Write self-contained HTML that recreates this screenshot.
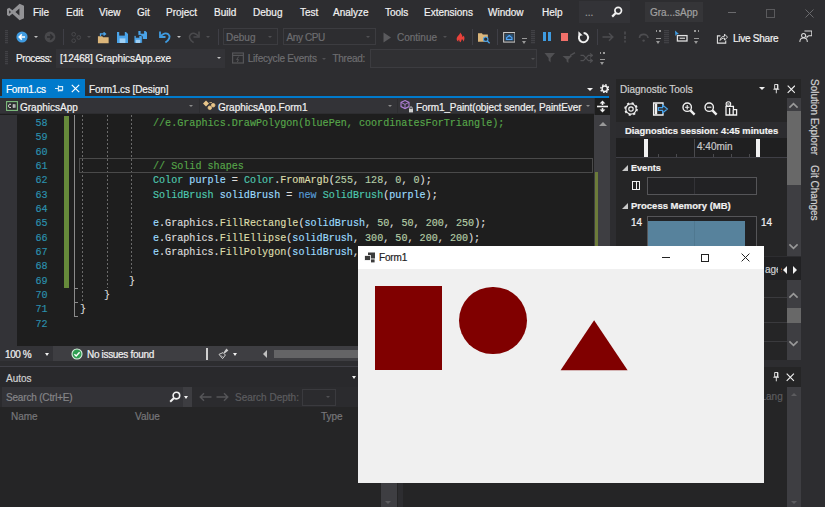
<!DOCTYPE html>
<html><head><meta charset="utf-8"><title>GraphicsApp</title>
<style>
*{margin:0;padding:0;box-sizing:border-box}
html,body{width:825px;height:507px;overflow:hidden;background:#2d2d30}
body{position:relative;font-family:"Liberation Sans",sans-serif;font-size:10px;color:#f1f1f1}
.a{position:absolute;white-space:nowrap}
.t{position:absolute;white-space:nowrap;line-height:14px;font-size:10px;-webkit-text-stroke:.2px}
.b{font-weight:bold}
.m{color:#f1f1f1;top:6px}
.dim{color:#6d6d70}
.code{position:absolute;white-space:pre;font-family:"Liberation Mono",monospace;font-size:10.1px;line-height:14px;left:153px;color:#dcdcdc;-webkit-text-stroke:.15px}
.ln{position:absolute;font-family:"Liberation Mono",monospace;font-size:10.1px;line-height:14px;left:23px;width:24.5px;text-align:right;color:#2b91af;-webkit-text-stroke:.15px}
.g{color:#57a64a}.ty{color:#4ec9b0}.v{color:#9cdcfe}.k{color:#569cd6}.n{color:#b5cea8}.fn{color:#dcdcaa}

.grip{width:3px;height:14px;background:repeating-linear-gradient(180deg,#414145 0 1px,#323236 1px 2px)}
.sep{width:1px;height:16px;background:#3f3f46}
.dd{width:0;height:0;border-left:2.6px solid transparent;border-right:2.6px solid transparent;border-top:2.8px solid #c0c0c0}
.dimdd{border-top-color:#505053}
.combo{border:1px solid #3c3c40;background:#2d2d30}
.ovf{width:5px;height:6px;border-top:1px solid #999;}
.ovf:after{content:"";position:absolute;left:0;top:2px;border-left:2.5px solid transparent;border-right:2.5px solid transparent;border-top:3px solid #999}
.ovd{width:5px;height:2px;background:linear-gradient(90deg,#999 0 1.5px,transparent 1.5px 3.5px,#999 3.5px 5px)}

.vd{width:1px;background:repeating-linear-gradient(180deg,#6a6a6a 0 2px,transparent 2px 4px)}

.tri{width:0;height:0;border-left:6px solid transparent;border-bottom:6px solid #c8c8c8}
.vt{transform-origin:0 0;transform:rotate(90deg);font-size:10px;-webkit-text-stroke:.2px;line-height:14px;color:#d0d0d0}
</style></head><body>

<!-- ===== menu bar ===== -->
<div id="menubar">
<svg class="a" style="left:6px;top:3px" width="20" height="18" viewBox="0 0 20 18"><path d="M13.6 0.8L18 2.8V15.2L13.6 17.2L6.4 10.7L3.2 13.2L1 12.1V5.9L3.2 4.8L6.4 7.3Z M13.4 5.6L9.4 9L13.4 12.4Z M3.2 7.2V10.8L5 9Z" fill="#939396" fill-rule="evenodd"/></svg>
<span class="t m" style="left:33px">File</span>
<span class="t m" style="left:66px">Edit</span>
<span class="t m" style="left:99px">View</span>
<span class="t m" style="left:137px">Git</span>
<span class="t m" style="left:166px">Project</span>
<span class="t m" style="left:214px">Build</span>
<span class="t m" style="left:253px">Debug</span>
<span class="t m" style="left:300px">Test</span>
<span class="t m" style="left:333px">Analyze</span>
<span class="t m" style="left:385px">Tools</span>
<span class="t m" style="left:424px">Extensions</span>
<span class="t m" style="left:488px">Window</span>
<span class="t m" style="left:542px">Help</span>
<div class="a" style="left:579px;top:1px;width:51px;height:22px;background:#333337"></div>
<span class="t" style="left:585px;top:6px;color:#999">...</span>
<svg class="a" style="left:611px;top:6px" width="12" height="12" viewBox="0 0 12 12"><circle cx="7.2" cy="4.6" r="3.3" fill="none" stroke="#f1f1f1" stroke-width="1.7"/><path d="M4.8 7L1.2 10.6" stroke="#f1f1f1" stroke-width="2.2"/></svg>
<div class="a" style="left:645px;top:2px;width:58px;height:20px;background:#353538"></div>
<div class="a" style="left:728px;top:12px;width:8px;height:1px;background:#6a6a6d"></div>
<div class="a" style="left:766px;top:9px;width:8.5px;height:8.5px;border:1px solid #5a5a5d"></div>
<svg class="a" style="left:805px;top:9px" width="9" height="9" viewBox="0 0 9 9"><path d="M0.5 0.5L8.5 8.5M8.5 0.5L0.5 8.5" stroke="#6a6a6d" stroke-width="1"/></svg>
<span class="t" style="left:650px;top:6px;color:#a0a0a0">Gra...sApp</span>
</div>

<!-- ===== toolbars ===== -->
<div id="toolbar1">
<div class="a grip" style="left:5px;top:30px"></div>
<svg class="a" style="left:16px;top:31px" width="12" height="12" viewBox="0 0 12 12"><circle cx="6" cy="6" r="5.6" fill="#3f9be0"/><path d="M9 6H3.4M5.8 3.4L3.2 6L5.8 8.6" stroke="#fff" stroke-width="1.5" fill="none"/></svg>
<div class="a dd" style="left:34px;top:36px"></div>
<svg class="a" style="left:44px;top:31px" width="12" height="12" viewBox="0 0 12 12"><circle cx="6" cy="6" r="5.4" fill="#48484b"/><path d="M3 6H8.6M6.2 3.4L8.8 6L6.2 8.6" stroke="#2d2d30" stroke-width="1.5" fill="none"/></svg>
<div class="a sep" style="left:63px;top:29px"></div>
<svg class="a" style="left:69.5px;top:30.5px" width="12" height="13" viewBox="0 0 13 14"><circle cx="4" cy="3.5" r="2" stroke="#4a4a4d" fill="none"/><circle cx="4" cy="10.5" r="2" stroke="#4a4a4d" fill="none"/><circle cx="9.5" cy="7" r="2" stroke="#4a4a4d" fill="none"/></svg>
<div class="a dd dimdd" style="left:87px;top:36px"></div>
<svg class="a" style="left:97px;top:31.5px" width="13" height="12" viewBox="0 0 15 14"><path d="M1 5h5l1 1.2h6.5V13H1z" fill="#dcb67a"/><path d="M4 5V2.2h5.5M7.6 0.4l2.2 1.8L7.6 4" stroke="#4aa3e8" stroke-width="1.5" fill="none"/></svg>
<svg class="a" style="left:117px;top:32px" width="11" height="11" viewBox="0 0 11 11"><path d="M0 0h9l2 2v9H0z" fill="#4aa3e8"/><rect x="2.2" y="0" width="5.6" height="3.6" fill="#2d2d30"/><rect x="2.6" y="6.4" width="5.8" height="4.6" fill="#9fd0f5"/></svg>
<svg class="a" style="left:133.5px;top:30.8px" width="13.2" height="12.4" viewBox="0 0 15 14"><path d="M5 0h8l2 2v7H5z" fill="#4aa3e8"/><rect x="7.5" y="0" width="4" height="3" fill="#2d2d30"/><path d="M0 5h8l1.5 1.5V14H0z" fill="#4aa3e8" stroke="#2d2d30" stroke-width="1"/><rect x="2" y="5" width="4" height="2.6" fill="#2d2d30"/><rect x="2" y="10" width="5" height="4" fill="#9fd0f5"/></svg>
<svg class="a" style="left:158px;top:30px" width="14" height="14" viewBox="0 0 14 14"><path d="M2 1.5V7H7.5" stroke="#3f9be0" stroke-width="1.8" fill="none"/><path d="M2.6 6.4C4.5 3.4 8 2.4 10.3 4.3C12.6 6.3 11.6 9.8 7.4 12.6" stroke="#3f9be0" stroke-width="1.8" fill="none"/></svg>
<div class="a dd" style="left:177px;top:36px"></div>
<svg class="a" style="left:187px;top:30px" width="14" height="14" viewBox="0 0 14 14"><path d="M12 1.5V7H6.5" stroke="#4a4a4d" stroke-width="1.6" fill="none"/><path d="M11.4 6.4C9.5 3.4 6 2.4 3.7 4.3C1.4 6.3 2.4 9.8 6.6 12.6" stroke="#4a4a4d" stroke-width="1.6" fill="none"/></svg>
<div class="a dd dimdd" style="left:206px;top:36px"></div>
<div class="a sep" style="left:217.5px;top:29px"></div>
<div class="a combo" style="left:222.5px;top:28.4px;width:55.5px;height:17px"></div>
<span class="t dim" style="left:226px;top:30.5px">Debug</span>
<div class="a dd dimdd" style="left:268px;top:36px"></div>
<div class="a combo" style="left:282.5px;top:28.4px;width:93.5px;height:17px"></div>
<span class="t dim" style="left:286.5px;top:30.5px;letter-spacing:-.38px">Any CPU</span>
<div class="a dd dimdd" style="left:366px;top:36px"></div>
<svg class="a" style="left:383px;top:32px" width="9" height="11" viewBox="0 0 9 11"><path d="M0.5 0.5L8 5.5L0.5 10.5z" fill="#5a5a5d"/></svg>
<span class="t dim" style="left:397px;top:30.5px">Continue</span>
<div class="a dd dimdd" style="left:443px;top:36px"></div>
<svg class="a" style="left:455.6px;top:32px" width="9.2" height="11" viewBox="0 0 11 14" preserveAspectRatio="none"><path d="M5 0.5C6.5 3 8 4 7.6 6.4C9 5.6 9.2 4.6 9.2 4.6C10.6 7 10.6 10.4 8.4 12.4C8.8 11 8.2 9.6 7 9C7 10.6 6 11.4 5.6 13C4 12.4 3.6 11 3.8 9.6C2.8 10.2 2.6 11.2 2.8 12.4C0.6 10.8 0.2 8 1.6 6C2.8 4.2 4.8 3 5 0.5z" fill="#e8413a"/></svg>
<div class="a sep" style="left:472px;top:29px"></div>
<svg class="a" style="left:477.3px;top:31.5px" width="14" height="12" viewBox="0 0 16 14"><path d="M1 1.5h4.6l1 1.3H12.5V11.5H1z" fill="#dcb67a"/><circle cx="10" cy="8.4" r="2.6" fill="#2d2d30" stroke="#4aa3e8" stroke-width="1.3"/><path d="M12 10.4L14.6 13" stroke="#4aa3e8" stroke-width="1.6"/></svg>
<div class="a sep" style="left:497px;top:29px"></div>
<svg class="a" style="left:502.5px;top:32px" width="12.6" height="10.6" viewBox="0 0 14 12"><rect x="0.6" y="0.6" width="12.8" height="10.8" fill="none" stroke="#c8c8c8" stroke-width="1.2"/><rect x="2.2" y="2.4" width="9.6" height="7.4" fill="#2a4f70"/><path d="M4 8.6V6.4L7 4l3 2.4v2.2z" fill="none" stroke="#55aaff" stroke-width="1.2"/></svg>
<div class="a ovf" style="left:522px;top:38px"></div>
<div class="a grip" style="left:530.5px;top:30px;width:4.5px"></div>
<div class="a" style="left:542.5px;top:32.2px;width:3px;height:8.6px;background:#3f9be0"></div>
<div class="a" style="left:547.5px;top:32.2px;width:3px;height:8.6px;background:#3f9be0"></div>
<div class="a" style="left:560.7px;top:33.2px;width:7.6px;height:7.4px;background:#f1706a"></div>
<svg class="a" style="left:577px;top:30px" width="13" height="14" viewBox="0 0 13 14"><path d="M3.2 4.4A4.6 4.6 0 1 0 6.6 3" stroke="#f1f1f1" stroke-width="1.9" fill="none"/><path d="M1.4 1.2V5.6H5.8z" fill="#f1f1f1"/></svg>
<div class="a sep" style="left:597px;top:29px"></div>
<svg class="a" style="left:602px;top:32px" width="12" height="10" viewBox="0 0 12 10"><path d="M0.5 5H10.5M7 1.2L10.8 5L7 8.8" stroke="#4d4d50" stroke-width="1.5" fill="none"/></svg>
<svg class="a" style="left:622px;top:30px" width="6" height="14" viewBox="0 0 6 14"><path d="M3 1.5V12.5" stroke="#4d4d50" stroke-width="1.6" stroke-dasharray="3 1.5"/></svg>
<svg class="a" style="left:637.5px;top:31px" width="12" height="12" viewBox="0 0 12 12"><path d="M1.5 7C1.5 2.2 10 2.2 10 7" stroke="#4d4d50" stroke-width="1.6" fill="none"/><circle cx="5.6" cy="9.6" r="1.2" fill="#4d4d50"/></svg>
<div class="a ovf" style="left:656px;top:38px"></div>
<div class="a ovd" style="left:656px;top:30px"></div>
<div class="a grip" style="left:664px;top:30px;width:5px"></div>
<svg class="a" style="left:674px;top:30px" width="14" height="13" viewBox="0 0 14 13"><path d="M1 0.5L5 4L2.6 4.4L1.4 6z" fill="#3f9be0"/><rect x="3.4" y="5.6" width="9.6" height="5.4" fill="none" stroke="#e0e0e0" stroke-width="1.3"/><rect x="5.6" y="7.6" width="5.4" height="1.4" fill="#bbb"/></svg>
<div class="a ovf" style="left:693.5px;top:38px"></div>
<div class="a ovd" style="left:693.5px;top:30px"></div>
<svg class="a" style="left:715.5px;top:32.4px" width="12.4" height="12.4" viewBox="0 0 14 14"><path d="M5 4.4H1.6V12.6H11V9.6" stroke="#e0e0e0" stroke-width="1.2" fill="none"/><path d="M4.6 9.6C4.8 6.4 7 4.8 9.6 4.8V2.4L13 5.8L9.6 9.2V6.9C7.4 6.9 5.8 7.6 4.6 9.6z" stroke="#e0e0e0" stroke-width="1.1" fill="none"/></svg>
<span class="t" style="left:733px;top:32px;color:#f1f1f1;letter-spacing:-.25px">Live Share</span>
<svg class="a" style="left:798.6px;top:30.2px" width="13.6" height="13" viewBox="0 0 16 15"><path d="M6.4 1H15V6.6H11.4L9.4 8.4V6.6" stroke="#d8d8d8" stroke-width="1.2" fill="none"/><circle cx="5.4" cy="6.4" r="2.4" stroke="#d8d8d8" stroke-width="1.2" fill="#2d2d30"/><path d="M1 14C1 10.6 3 9.4 5.4 9.4C7.8 9.4 9.8 10.6 9.8 14" stroke="#d8d8d8" stroke-width="1.2" fill="none"/></svg>
</div>
<div id="toolbar2">
<div class="a grip" style="left:5px;top:51px"></div>
<span class="t" style="left:16px;top:52px;color:#f1f1f1;letter-spacing:-.4px">Process:</span>
<div class="a" style="left:56px;top:49px;width:168.5px;height:18.5px;background:#333337"></div>
<span class="t" style="left:60px;top:52px;color:#f1f1f1;letter-spacing:-.08px">[12468] GraphicsApp.exe</span>
<div class="a dd" style="left:217px;top:57px"></div>
<svg class="a" style="left:232px;top:52px" width="12" height="12" viewBox="0 0 12 12"><rect x="0.6" y="1" width="10.8" height="10" fill="none" stroke="#555558" stroke-width="1.2"/><path d="M0.6 3.4H11.4" stroke="#555558" stroke-width="1.2"/><path d="M6.6 4.6L4.6 7.6H6.4L5.4 10" stroke="#555558" stroke-width="1" fill="none"/></svg>
<span class="t dim" style="left:247.7px;top:52px;letter-spacing:-.2px">Lifecycle Events</span>
<div class="a dd dimdd" style="left:321.7px;top:57.5px"></div>
<span class="t dim" style="left:332.4px;top:52px;letter-spacing:-.25px">Thread:</span>
<div class="a combo" style="left:370px;top:49px;width:167px;height:18.5px;background:#303033"></div>
<div class="a dd dimdd" style="left:530.5px;top:57.5px"></div>
<svg class="a" style="left:543.5px;top:52px" width="12" height="12" viewBox="0 0 12 12"><path d="M0.5 1H11L6.6 6V10.6L4.6 8.6V6z" fill="#505053"/></svg>
<svg class="a" style="left:562px;top:52px" width="14" height="12" viewBox="0 0 14 12"><path d="M0.5 4H10L6.4 7.6V11L4.6 9.4V7.6z" fill="#505053"/><path d="M8 3.6L13 0.6" stroke="#505053" stroke-width="1.4"/></svg>
<svg class="a" style="left:580px;top:52px" width="13" height="12" viewBox="0 0 13 12"><path d="M0.5 3.4H3.4L8.4 8.6H12M0.5 8.6H3.4L8.4 3.4H12M10 1.4L12.4 3.4L10 5.4M10 6.6L12.4 8.6L10 10.6" stroke="#505053" stroke-width="1.2" fill="none"/></svg>
<div class="a ovf" style="left:600px;top:59px"></div>
<div class="a ovd" style="left:600px;top:52px"></div>
</div>

<!-- ===== document tabs ===== -->
<div id="tabs">
<div class="a" style="left:0;top:96px;width:609px;height:1.7px;background:#007acc"></div>
<div class="a" style="left:2px;top:79.3px;width:83px;height:17.7px;background:#007acc"></div>
<span class="t" style="left:6px;top:82.5px;color:#fff;letter-spacing:-.25px">Form1.cs</span>
<svg class="a" style="left:55px;top:84px" width="9" height="9" viewBox="0 0 9 9"><path d="M0 4.5H3M3.4 1.6V7.4M3.4 2.6H7.6V6H3.4M3.4 6.6H7.6" stroke="#d6ebf8" stroke-width="1.1" fill="none"/></svg>
<svg class="a" style="left:71px;top:84px" width="9" height="9" viewBox="0 0 9 9"><path d="M0.8 0.8L8.2 8.2M8.2 0.8L0.8 8.2" stroke="#fff" stroke-width="1.2"/></svg>
<span class="t" style="left:89px;top:82.5px;color:#f1f1f1;letter-spacing:-.1px">Form1.cs [Design]</span>
<div class="a dd" style="left:586.5px;top:88px;border-top-color:#f1f1f1;border-width:3.5px 3.2px 0 3.2px"></div>
<svg class="a" style="left:599.5px;top:83.5px" width="9.5" height="9.5" viewBox="0 0 11 11"><circle cx="5.5" cy="5.5" r="3.1" fill="none" stroke="#f1f1f1" stroke-width="1.7"/><circle cx="5.5" cy="5.5" r="4.6" fill="none" stroke="#f1f1f1" stroke-width="1.6" stroke-dasharray="1.8 1.81"/></svg>
<!-- nav bar -->
<div class="a" style="left:0;top:97.7px;width:610px;height:17px;background:#2d2d30"></div>
<div class="a" style="left:0;top:97.7px;width:594px;height:15.6px;background:#333337"></div>
<svg class="a" style="left:6px;top:101px" width="12" height="10" viewBox="0 0 12 10"><rect x="0.6" y="0.6" width="10.8" height="8.8" fill="#2d2d30" stroke="#7fbf7f" stroke-width="1.1"/><path d="M5 3.4C3.4 2.6 2.6 3.6 2.6 5C2.6 6.4 3.6 7.2 5 6.4" stroke="#e0e0e0" stroke-width="1" fill="none"/><path d="M6.6 4.2H9.6M6.6 5.8H9.6M7.4 3V7M8.8 3V7" stroke="#e0e0e0" stroke-width=".7"/></svg>
<span class="t" style="left:20px;top:100.7px;color:#f1f1f1">GraphicsApp</span>
<div class="a dd dimdd" style="left:189px;top:105px;border-top-color:#8a8a8a"></div>
<div class="a" style="left:199px;top:99px;width:1px;height:14px;background:#2d2d30"></div>
<svg class="a" style="left:203px;top:100px" width="13" height="12" viewBox="0 0 13 12"><path d="M3 0.6L6 3.6L3 6.6L0 3.6z" fill="#e8c58a"/><path d="M6.4 2.6H9M8.4 5.2A1.8 1.8 0 1 0 12 5.2A1.8 1.8 0 1 0 8.4 5.2M5 7.8A1.8 1.8 0 1 0 8.6 7.8A1.8 1.8 0 1 0 5 7.8" fill="#e8c58a" stroke="#e8c58a" stroke-width=".8"/></svg>
<span class="t" style="left:218px;top:100.7px;color:#f1f1f1">GraphicsApp.Form1</span>
<div class="a dd dimdd" style="left:388px;top:105px;border-top-color:#8a8a8a"></div>
<div class="a" style="left:397px;top:99px;width:1px;height:14px;background:#2d2d30"></div>
<svg class="a" style="left:400px;top:100px" width="14" height="13" viewBox="0 0 14 13"><path d="M5 0.6L9 2.4V6.6L5 8.6L1 6.6V2.4z" fill="none" stroke="#b180d7" stroke-width="1.1"/><path d="M1 2.4L5 4.4L9 2.4M5 4.4V8.6" stroke="#b180d7" stroke-width=".9" fill="none"/><rect x="9" y="9" width="4" height="3.4" fill="#d0d0d0"/><path d="M9.8 9V8A1.2 1.2 0 0 1 12.2 8V9" stroke="#d0d0d0" stroke-width=".9" fill="none"/></svg>
<span class="t" style="left:416px;top:100.7px;color:#f1f1f1;letter-spacing:-.1px">Form1_Paint(object sender, PaintEver</span>
<div class="a dd dimdd" style="left:586px;top:105px;border-top-color:#8a8a8a"></div>
<div class="a" style="left:595px;top:98px;width:15px;height:17px;background:#1e1e1e"></div>
<svg class="a" style="left:597px;top:100px" width="11" height="13" viewBox="0 0 11 13"><path d="M0 6.5H11" stroke="#f1f1f1" stroke-width="1.6"/><path d="M5.5 0.4L8.4 3.4H6.3V5H4.7V3.4H2.6zM5.5 12.6L8.4 9.6H6.3V8H4.7V9.6H2.6z" fill="#f1f1f1"/></svg>
</div>

<!-- ===== editor ===== -->
<div id="editor">
<div class="a" style="left:0;top:113.6px;width:594px;height:232.4px;background:#1e1e1e"></div>
<div class="a" style="left:0;top:114.6px;width:17px;height:231.4px;background:#333337"></div>
<div class="a" style="left:594px;top:115px;width:16px;height:231px;background:#3e3e42"></div>
<div class="a" style="left:598.5px;top:122px;border-left:4px solid transparent;border-right:4px solid transparent;border-bottom:4.5px solid #999"></div>
<div class="a" style="left:64.3px;top:116px;width:4.4px;height:172px;background:#668a3a"></div>
<div class="a" style="left:74px;top:115px;width:1px;height:202px;background:#8a8a8a"></div>
<div class="a" style="left:74px;top:287.5px;width:4px;height:1px;background:#8a8a8a"></div>
<div class="a" style="left:74px;top:302px;width:4px;height:1px;background:#8a8a8a"></div>
<div class="a" style="left:74px;top:316px;width:4px;height:1px;background:#8a8a8a"></div>
<div class="a vd" style="left:82px;top:115px;height:187px"></div>
<div class="a vd" style="left:106.5px;top:115px;height:173px"></div>
<div class="a vd" style="left:131px;top:115px;height:159px"></div>
<div class="a" style="left:79px;top:158px;width:514px;height:15px;border:1px solid #4a4a4a"></div>
<div class="a" style="left:594.6px;top:172px;width:3.8px;height:88px;background:#6c7b3a"></div>
<span class="ln" style="top:117.0px">58</span>
<span class="code" style="top:117.0px"><span class="g">//e.Graphics.DrawPolygon(bluePen, coordinatesForTriangle);</span></span>
<span class="ln" style="top:131.3px">59</span>
<span class="ln" style="top:145.7px">60</span>
<span class="ln" style="top:160.0px">61</span>
<span class="code" style="top:160.0px"><span class="g">// Solid shapes</span></span>
<span class="ln" style="top:174.4px">62</span>
<span class="code" style="top:174.4px"><span class="ty">Color</span> <span class="v">purple</span> = <span class="ty">Color</span>.<span class="fn">FromArgb</span>(<span class="n">255</span>, <span class="n">128</span>, <span class="n">0</span>, <span class="n">0</span>);</span>
<span class="ln" style="top:188.7px">63</span>
<span class="code" style="top:188.7px"><span class="ty">SolidBrush</span> <span class="v">solidBrush</span> = <span class="k">new</span> <span class="ty">SolidBrush</span>(<span class="v">purple</span>);</span>
<span class="ln" style="top:203.0px">64</span>
<span class="ln" style="top:217.4px">65</span>
<span class="code" style="top:217.4px"><span class="v">e</span>.Graphics.<span class="fn">FillRectangle</span>(<span class="v">solidBrush</span>, <span class="n">50</span>, <span class="n">50</span>, <span class="n">200</span>, <span class="n">250</span>);</span>
<span class="ln" style="top:231.7px">66</span>
<span class="code" style="top:231.7px"><span class="v">e</span>.Graphics.<span class="fn">FillEllipse</span>(<span class="v">solidBrush</span>, <span class="n">300</span>, <span class="n">50</span>, <span class="n">200</span>, <span class="n">200</span>);</span>
<span class="ln" style="top:246.1px">67</span>
<span class="code" style="top:246.1px"><span class="v">e</span>.Graphics.<span class="fn">FillPolygon</span>(<span class="v">solidBrush</span>, coordinatesForTriangle);</span>
<span class="ln" style="top:260.4px">68</span>
<span class="ln" style="top:274.7px">69</span>
<span class="ln" style="top:289.1px">70</span>
<span class="ln" style="top:303.4px">71</span>
<span class="ln" style="top:317.8px">72</span>
<span class="code" style="top:274.7px;left:129px">}</span>
<span class="code" style="top:289.1px;left:104px">}</span>
<span class="code" style="top:303.4px;left:80px">}</span>
<div class="a" style="left:0;top:346px;width:610px;height:15.4px;background:#3e3e42"></div>
<div class="a" style="left:0;top:346px;width:53px;height:15.4px;background:#333337"></div>
<span class="t" style="left:5px;top:348px;color:#f1f1f1;letter-spacing:-.4px">100 %</span>
<div class="a dd" style="left:45.3px;top:353.3px;border-top-color:#f1f1f1;border-width:3px 2.9px 0 2.9px"></div>
<svg class="a" style="left:71px;top:348px" width="12" height="12" viewBox="0 0 12 12"><circle cx="6" cy="6" r="5" fill="#2f9e52" stroke="#d9f2e0" stroke-width="1.1"/><path d="M3.4 6.2L5.2 8L8.6 4.2" stroke="#fff" stroke-width="1.4" fill="none"/></svg>
<span class="t" style="left:87px;top:348px;color:#f1f1f1;letter-spacing:-.32px">No issues found</span>
<div class="a" style="left:206px;top:348px;width:1.5px;height:12px;background:#d0d0d0"></div>
<svg class="a" style="left:218px;top:348px" width="12" height="12" viewBox="0 0 12 12"><path d="M8.4 0.6L10.4 2.6L6.6 5.4L5.6 4.4z" fill="#cfcfcf"/><path d="M5 4.6L7.4 7L4.6 10.6L1 6.4z" fill="none" stroke="#cfcfcf" stroke-width="1"/><path d="M3 7.4L4.6 9" stroke="#cfcfcf" stroke-width=".8"/></svg>
<div class="a dd" style="left:233.3px;top:353.3px;border-top-color:#f1f1f1;border-width:3px 2.9px 0 2.9px"></div>
<div class="a" style="left:263px;top:350px;border-top:4px solid transparent;border-bottom:4px solid transparent;border-right:4.5px solid #c0c0c0"></div>
<div class="a" style="left:274px;top:350px;width:100px;height:8px;background:#646466"></div>
</div>

<!-- ===== autos ===== -->
<div id="autos">
<div class="a" style="left:0;top:366px;width:398px;height:141px;background:#252526"></div>
<div class="a" style="left:0;top:367px;width:398px;height:21px;background:#29292c"></div>
<div class="a" style="left:0;top:366px;width:398px;height:1px;background:#3f3f46"></div>

<span class="t" style="left:6px;top:371.7px;color:#d0d0d0">Autos</span>
<div class="a dd" style="left:352.3px;top:376px;border-top-color:#f1f1f1;border-width:3px 2.9px 0 2.9px"></div>
<div class="a" style="left:0;top:387px;width:381px;height:19.5px;background:#2b2b2e"></div>
<div class="a" style="left:2px;top:387px;width:190px;height:19.5px;background:#333337"></div>
<span class="t" style="left:6px;top:391px;color:#858588;letter-spacing:-.18px">Search (Ctrl+E)</span>
<svg class="a" style="left:169px;top:391px" width="12" height="12" viewBox="0 0 12 12"><circle cx="7.4" cy="4.6" r="3.3" fill="none" stroke="#f1f1f1" stroke-width="1.6"/><path d="M5 7L1.2 10.8" stroke="#f1f1f1" stroke-width="2"/></svg>
<div class="a" style="left:182.5px;top:387px;width:9.5px;height:19.5px;background:#3d3d41"></div>
<div class="a dd" style="left:184.3px;top:396px;border-top-color:#f1f1f1;border-width:3px 2.9px 0 2.9px"></div>
<svg class="a" style="left:199px;top:392px" width="13" height="10" viewBox="0 0 13 10"><path d="M12.5 5H1.5M5 1.2L1.2 5L5 8.8" stroke="#555558" stroke-width="1.4" fill="none"/></svg>
<svg class="a" style="left:216px;top:392px" width="13" height="10" viewBox="0 0 13 10"><path d="M0.5 5H11.5M8 1.2L11.8 5L8 8.8" stroke="#555558" stroke-width="1.4" fill="none"/></svg>
<span class="t dim" style="left:235px;top:390.5px;color:#5c5c5f">Search Depth:</span>
<div class="a combo" style="left:302px;top:389px;width:34px;height:17px;border-color:#3a3a3e;background:transparent"></div>
<div class="a dd dimdd" style="left:326px;top:396px;border-width:2.5px 2.5px 0 2.5px"></div>
<span class="t" style="left:11px;top:410.2px;color:#77777a">Name</span>
<span class="t" style="left:135px;top:410.2px;color:#77777a">Value</span>
<span class="t" style="left:321px;top:410.2px;color:#77777a">Type</span>
<div class="a" style="left:381px;top:388px;width:16px;height:119px;background:#3e3e42"></div>
<div class="a dd" style="left:385px;top:501px;border-top-color:#5c5c5f;border-width:3px 3px 0 3px"></div>
<!-- second bottom panel -->
<div class="a" style="left:403px;top:367px;width:397.7px;height:140px;background:#252526"></div>


<svg class="a" style="left:772.8px;top:372.4px" width="6.6" height="9.8" viewBox="0 0 8 12"><path d="M2 0.6H6V6H2zM0.4 6.4H7.6M4 6.4V11.4M5.4 0.6V6" stroke="#f1f1f1" stroke-width="1.1" fill="none"/></svg>
<svg class="a" style="left:786.2px;top:373px" width="8.6" height="8.6" viewBox="0 0 10 10"><path d="M0.8 0.8L9.2 9.2M9.2 0.8L0.8 9.2" stroke="#f1f1f1" stroke-width="1.3"/></svg>
<span class="t" style="left:760.5px;top:389.5px;color:#5c5c5f">Lang</span>
<div class="a" style="left:787px;top:387px;width:13.7px;height:120px;background:#3e3e42"></div>
<div class="a" style="left:791px;top:392.5px;border-left:3px solid transparent;border-right:3px solid transparent;border-bottom:3px solid #5c5c5f"></div>
<div class="a" style="left:791px;top:501px;border-left:3px solid transparent;border-right:3px solid transparent;border-top:3px solid #5c5c5f"></div>
</div>

<!-- ===== diagnostic tools ===== -->
<div id="diag">
<div class="a" style="left:615.5px;top:79px;width:185.2px;height:281px;background:#252526"></div>

<span class="t" style="left:620px;top:83.2px;color:#d0d0d0">Diagnostic Tools</span>
<div class="a dd" style="left:759px;top:87px;border-top-color:#f1f1f1;border-width:3.5px 3.5px 0 3.5px"></div>
<svg class="a" style="left:773.4px;top:84.2px" width="6.6" height="9.8" viewBox="0 0 8 12"><path d="M2 0.6H6V6H2zM0.4 6.4H7.6M4 6.4V11.4M5.4 0.6V6" stroke="#f1f1f1" stroke-width="1.1" fill="none"/></svg>
<svg class="a" style="left:786.6px;top:85px" width="8.6" height="8.6" viewBox="0 0 10 10"><path d="M0.8 0.8L9.2 9.2M9.2 0.8L0.8 9.2" stroke="#f1f1f1" stroke-width="1.3"/></svg>
<!-- toolbar icons -->
<svg class="a" style="left:624px;top:102px" width="14" height="14" viewBox="0 0 14 14"><circle cx="7" cy="7" r="2.2" fill="none" stroke="#f1f1f1" stroke-width="1.2"/><circle cx="7" cy="7" r="5.2" fill="none" stroke="#f1f1f1" stroke-width="1.2"/><circle cx="7" cy="7" r="6" fill="none" stroke="#f1f1f1" stroke-width="1.6" stroke-dasharray="2.2 2.5"/></svg>
<svg class="a" style="left:652px;top:102px" width="17" height="14" viewBox="0 0 17 14"><path d="M11 3V1H1.6V13H11V11" stroke="#f1f1f1" stroke-width="1.3" fill="none"/><path d="M4 1.6V12.4" stroke="#f1f1f1" stroke-width="2.4"/><path d="M6.4 5.6H10.6V3L15.4 7L10.6 11V8.4H6.4z" fill="#2d2d30" stroke="#4aa3e8" stroke-width="1.2"/></svg>
<svg class="a" style="left:682px;top:102px" width="14" height="14" viewBox="0 0 14 14"><circle cx="5.2" cy="5.2" r="4.2" fill="none" stroke="#f1f1f1" stroke-width="1.4"/><path d="M8.4 8.4L12.6 12.6" stroke="#f1f1f1" stroke-width="2.4"/><path d="M3 5.2H7.4M5.2 3V7.4" stroke="#f1f1f1" stroke-width="1.1"/></svg>
<svg class="a" style="left:704px;top:102px" width="14" height="14" viewBox="0 0 14 14"><circle cx="5.2" cy="5.2" r="4.2" fill="none" stroke="#f1f1f1" stroke-width="1.4"/><path d="M8.4 8.4L12.6 12.6" stroke="#f1f1f1" stroke-width="2.4"/><path d="M3 5.2H7.4" stroke="#f1f1f1" stroke-width="1.1"/></svg>
<svg class="a" style="left:724px;top:101px" width="14" height="15" viewBox="0 0 14 15"><path d="M2 5.4V14H12.6V8.6H9.4V5.4zM5.6 7V14M9.2 9V14" fill="none" stroke="#f1f1f1" stroke-width="1.3"/><circle cx="4.4" cy="3" r="2.3" fill="none" stroke="#f1f1f1" stroke-width="1.1"/><path d="M3.2 3H5.6" stroke="#f1f1f1" stroke-width="1"/></svg>
<!-- session header -->

<div class="a" style="left:615.5px;top:121.7px;width:171.5px;height:16.6px;background:#2c2c2f"></div>
<span class="t b" style="left:625px;top:123.5px;color:#f1f1f1;font-size:9.35px">Diagnostics session: 4:45 minutes</span>
<!-- ruler -->
<div class="a" style="left:615.5px;top:138.3px;width:171.5px;height:19px;background:#1f1f20"></div>
<div class="a" style="left:615.5px;top:157px;width:171.5px;height:1px;background:#3f3f46"></div>
<div class="a" style="left:644px;top:139px;width:4px;height:18px;background:#f1f1f1"></div>
<div class="a" style="left:756px;top:139px;width:4px;height:18px;background:#f1f1f1"></div>
<div class="a" style="left:694px;top:139px;width:1px;height:18px;background:#4a4a4d"></div>
<div class="a" style="left:658px;top:154px;width:96px;height:3px;background:repeating-linear-gradient(90deg,#4a4a4d 0 1px,transparent 1px 18.2px)"></div>
<span class="t" style="left:697px;top:140px;color:#c8c8c8">4:40min</span>
<!-- events -->
<div class="a tri" style="left:622px;top:165px"></div>
<span class="t b" style="left:631px;top:161px;color:#f1f1f1;font-size:9.1px">Events</span>
<div class="a" style="left:632px;top:181px;width:8px;height:9px;border:1px solid #f1f1f1"></div>
<div class="a" style="left:635.5px;top:181px;width:1px;height:9px;background:#f1f1f1"></div>
<div class="a" style="left:647px;top:177px;width:110px;height:18px;border:1px solid #555558;background:#222224"></div>
<div class="a" style="left:694px;top:178px;width:1px;height:16px;background:#333337"></div>
<!-- memory -->
<div class="a tri" style="left:622px;top:203px"></div>
<span class="t b" style="left:631px;top:199px;color:#f1f1f1;font-size:9.5px">Process Memory (MB)</span>
<span class="t" style="left:631px;top:216px;color:#f1f1f1">14</span>
<span class="t" style="left:761px;top:216px;color:#f1f1f1">14</span>
<div class="a" style="left:647px;top:216px;width:110px;height:40px;border:1px solid #555558;background:#222224"></div>
<div class="a" style="left:648px;top:221px;width:97px;height:30px;background:#57829c"></div>
<div class="a" style="left:694px;top:221px;width:1px;height:30px;background:#4f7890"></div>
<!-- scrollbar -->
<div class="a" style="left:787px;top:98px;width:13.7px;height:158px;background:#3e3e42"></div>
<div class="a" style="left:787px;top:111px;width:13.7px;height:74px;background:#686868"></div>
<svg class="a" style="left:788.4px;top:102px" width="11" height="7" viewBox="0 0 11 7"><path d="M1.4 5.6L5.5 1.6L9.6 5.6" stroke="#999" stroke-width="1.6" fill="none"/></svg>
<svg class="a" style="left:788.4px;top:243px" width="11" height="7" viewBox="0 0 11 7"><path d="M1.4 1.4L5.5 5.4L9.6 1.4" stroke="#999" stroke-width="1.6" fill="none"/></svg>
<!-- lower section (tabs + table) -->
<div class="a" style="left:615.5px;top:256px;width:185.2px;height:24px;background:#212123"></div>
<div class="a" style="left:615.5px;top:255.6px;width:185.2px;height:1.6px;background:#2d2d30"></div>
<span class="t" style="left:765px;top:263px;color:#d0d0d0">age</span>
<div class="a" style="left:777.8px;top:262px;width:3px;height:15px;background:#212123"></div>
<div class="a" style="left:783px;top:265.5px;border-top:4px solid transparent;border-bottom:4px solid transparent;border-right:4.5px solid #f1f1f1"></div>
<div class="a" style="left:793px;top:265.5px;border-top:4px solid transparent;border-bottom:4px solid transparent;border-left:4.5px solid #f1f1f1"></div>

<div class="a" style="left:615.5px;top:297px;width:171.5px;height:1px;background:#3a3a3d"></div>
<div class="a" style="left:615.5px;top:322px;width:171.5px;height:1px;background:#3a3a3d"></div>
<div class="a" style="left:615.5px;top:341px;width:171.5px;height:1px;background:#3a3a3d"></div>
<div class="a" style="left:787px;top:280px;width:13.7px;height:80px;background:#3e3e42"></div>
<div class="a" style="left:787px;top:308px;width:13.7px;height:14.5px;background:#686868"></div>
<svg class="a" style="left:788.4px;top:292px" width="11" height="7" viewBox="0 0 11 7"><path d="M1.4 5.6L5.5 1.6L9.6 5.6" stroke="#999" stroke-width="1.6" fill="none"/></svg>
<svg class="a" style="left:788.4px;top:340px" width="11" height="7" viewBox="0 0 11 7"><path d="M1.4 1.4L5.5 5.4L9.6 1.4" stroke="#999" stroke-width="1.6" fill="none"/></svg>
</div>

<!-- ===== right rail ===== -->
<div id="rail">

<span class="a vt" style="left:820.5px;top:79px">Solution Explorer</span>
<span class="a vt" style="left:820.5px;top:165px">Git Changes</span>
</div>

<!-- ===== Form1 window ===== -->
<div id="form1">
<div class="a" style="left:358px;top:246px;width:406px;height:237px;background:#f0f0f0"></div>
<div class="a" style="left:358px;top:246px;width:406px;height:23px;background:#ffffff"></div>
<svg class="a" style="left:364px;top:252px" width="12" height="11" viewBox="0 0 12 11"><rect x="4" y="0.5" width="7" height="6" fill="#3c3c3c"/><rect x="0.5" y="3.4" width="6" height="5" fill="#3c3c3c" stroke="#fff" stroke-width=".8"/><rect x="7" y="7.4" width="3.6" height="3" fill="#3c3c3c"/></svg>
<span class="t" style="left:379px;top:251px;color:#222;letter-spacing:-.15px">Form1</span>
<div class="a" style="left:662px;top:257px;width:8px;height:1px;background:#222"></div>
<div class="a" style="left:701px;top:253.5px;width:8px;height:8px;border:1px solid #222"></div>
<svg class="a" style="left:740.5px;top:253px" width="9" height="9" viewBox="0 0 9 9"><path d="M0.6 0.6L8.4 8.4M8.4 0.6L0.6 8.4" stroke="#222" stroke-width="1"/></svg>
<div class="a" style="left:375px;top:286.4px;width:67.2px;height:83.8px;background:#800000"></div>
<div class="a" style="left:459.4px;top:286.6px;width:67.3px;height:67.3px;border-radius:50%;background:#800000"></div>
<svg class="a" style="left:560px;top:319px" width="69" height="52" viewBox="0 0 69 52"><path d="M34.1 1.2L67.6 51.3H0.6z" fill="#800000"/></svg>
</div>

</body></html>
